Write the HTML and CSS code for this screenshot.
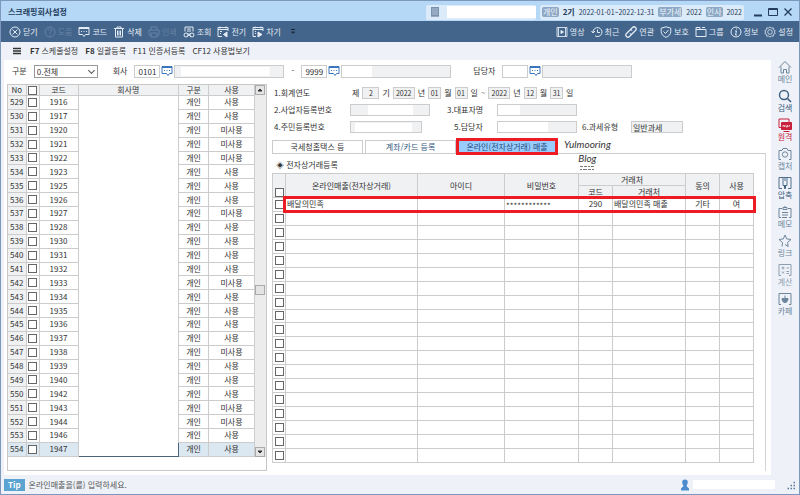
FILE: index.html
```html
<!DOCTYPE html>
<html lang="ko">

<head>
    <meta charset="UTF-8">
    <meta name="viewport" content="width=device-width, initial-scale=1.0">
    <title>스크래핑회사설정</title>
    <link rel="stylesheet" href="styles.css">
</head>

<body>
    <header class="titlebar">
        <h1 class="title">스크래핑회사설정</h1>
        <div class="company">
            <svg class="icon" viewBox="0 0 12 12"><path d="M2 1h8v10H2z" fill="#7892ad" stroke="none"/><path d="M4 2v7M6 2v7M8 2v7M1 11h10" stroke="#dce8f4" stroke-width=".6"/></svg>
            <span class="company-name"></span>
        </div>
        <div class="period">
            <span class="tag">개인</span>
            <b>2기</b>
            <span class="number">2022-01-01~2022-12-31</span>
            <span class="tag">부가세</span>
            <span class="number">2022</span>
            <span class="tag">인사</span>
            <span class="number">2022</span>
        </div>
        <div class="window-buttons">
            <button aria-label="최소화"><svg class="icon" viewBox="0 0 12 12"><path d="M2 9.500h8" stroke-width="2"/></svg></button>
            <button aria-label="최대화"><svg class="icon" viewBox="0 0 12 12"><path d="M1.500 2.500h9v7h-9zM1.500 3.500h9"/></svg></button>
            <button aria-label="닫기"><svg class="icon" viewBox="0 0 12 12"><path d="M2.500 2.500l7 7M9.500 2.500l-7 7" stroke-width="1.300"/></svg></button>
        </div>
    </header>

    <nav class="toolbar">
        <div class="tools">
            <button><svg class="icon" viewBox="0 0 12 12"><circle cx="6" cy="6" r="5"/><path d="M3.500 3.500l5 5M8.500 3.500l-5 5"/></svg>닫기</button>
            <button disabled><svg class="icon" viewBox="0 0 12 12"><circle cx="6" cy="6" r="5"/><path d="M4 4.500c0-2 4-2 4 0C8 6 6 5.500 6 7.500M6 8.500v1"/></svg>도움</button>
            <button><svg class="icon" viewBox="0 0 12 12"><path d="M1 1.500h10v7H7.500L6 10.500 4.500 8.500H1zM1 2.500h10M3 5.500h1M5.500 5.500h1M8 5.500h1"/></svg>코드</button>
            <button><svg class="icon" viewBox="0 0 12 12"><path d="M1 2.500h10M4 2.500v-1.500h4v1.500M2.500 2.500v8.500h7V2.500M4.500 4.500v5M6 4.500v5M7.500 4.500v5"/></svg>삭제</button>
            <button disabled><svg class="icon" viewBox="0 0 12 12"><path d="M3 4V1h6v3M3 9H1V4h10v5H9M3 7h6v4H3z"/></svg>인쇄</button>
            <button><svg class="icon" viewBox="0 0 12 12"><path d="M2 5.500V1h8v4.500M4 3h4M4 5h4M4.500 7L8 11M7.500 7L4 11"/><circle cx="3" cy="9" r="2"/><circle cx="9" cy="9" r="2"/></svg>조회</button>
            <button><svg class="icon" viewBox="0 0 12 12"><path d="M5 10.500H1v-9h10V5M1 3.500h10M3 .5v2M9 .5v2M3 5.500h2M3 7.500h1"/><path d="M10 6v5L6.500 8.500z" fill="currentColor"/></svg>전기</button>
            <button><svg class="icon" viewBox="0 0 12 12"><path d="M4 10.500H1v-9h10V5M1 3.500h10M3 .5v2M9 .5v2M3 5.500h1M3 7.500h1"/><path d="M6 6v5l4-2.500z" fill="currentColor"/></svg>차기</button>
            <button class="more" aria-label="더보기"><svg class="icon" viewBox="0 0 12 12"><path d="M4 3.500h4M4.500 6h3L6 7.500z" stroke="#1c2734"/></svg></button>
        </div>
        <div class="tools">
            <button><svg class="icon" viewBox="0 0 12 12"><path d="M1 1.500h10v9H1zM2.500 2v8M9.500 2v8" stroke-width=".9"/><path d="M5 4.500v3L7.500 6z" fill="currentColor"/></svg>영상</button>
            <button><svg class="icon" viewBox="0 0 12 12"><path d="M2 6a4.500 4.500 0 1 1 2 3.800M.5 5L2 7l2-2M6.500 3.500V6.500H9"/></svg>최근</button>
            <button><svg class="icon" viewBox="0 0 12 12"><path d="M5 4l2.500-2.500a1.800 1.800 0 0 1 3 3L7.500 7.500a1.500 1.500 0 0 1-2.500 0M7 8l-2.500 2.500a1.800 1.800 0 0 1-3-3L4.500 4.500a1.500 1.500 0 0 1 2.500 0" stroke-width="1.300"/></svg>연관</button>
            <button><svg class="icon" viewBox="0 0 12 12"><path d="M6 .8l4.800 1.400v3.300C10.800 8.500 8.500 10.500 6 11.300 3.500 10.500 1.200 8.500 1.200 5.500V2.200zM3.500 5.500L5.500 7.500 8.500 4"/></svg>보호</button>
            <button><svg class="icon" viewBox="0 0 12 12"><path d="M1 1.500h4v2h6v7H1zM1 3.500h4M7 1.500h3"/></svg>그룹</button>
            <button><svg class="icon" viewBox="0 0 12 12"><circle cx="6" cy="6" r="5"/><path d="M5 5h1.500L5.500 9H7M6.500 2.500v1"/></svg>정보</button>
            <button><svg class="icon" viewBox="0 0 12 12"><path d="M6 .8l1.300 1.300 1.900-.3.300 1.900 1.700.9L10.400 6l.8 1.500-1.700.8-.3 1.900-1.900-.2L6 11.200 4.700 10l-1.900.2-.3-1.900-1.700-.8L1.600 6 .8 4.600l1.700-.9.300-1.900 1.900.3z" stroke-width=".8"/><circle cx="6" cy="6" r="2.300" stroke-width=".8"/></svg>설정</button>
        </div>
    </nav>

    <nav class="menu">
        <button aria-label="메뉴"><svg class="icon" viewBox="0 0 12 12"><path d="M2 3.500h8M2 6h8M2 8.500h8" stroke-width="1.300"/></svg></button>
        <button><b>F7</b>스케줄설정</button>
        <button><b>F8</b>일괄등록</button>
        <button>F11 인증서등록</button>
        <button>CF12 사용법보기</button>
    </nav>

    <div class="workspace">
        <main class="content">
            <form class="filter">
                <label for="kind">구분</label>
                <div class="select">
                    <select id="kind">
                        <option>0.전체</option>
                    </select>
                </div>
                <label for="from">회사</label>
                <div class="lookup">
                    <input id="from" class="field short" value="0101">
                    <button type="button" aria-label="회사 찾기"><svg class="icon blue" viewBox="0 0 12 12"><path d="M1 1.500h10v7H8.500L7 10.500 5.500 8.500H1zM1 2.500h10M3 5.500h1M5.500 5.500h1M8 5.500h1"/></svg></button>
                    <input class="field name masked" aria-label="시작 회사명" readonly>
                </div>
                <span>-</span>
                <div class="lookup">
                    <input class="field short" value="9999" aria-label="끝 회사">
                    <button type="button" aria-label="회사 찾기"><svg class="icon blue" viewBox="0 0 12 12"><path d="M1 1.500h10v7H8.500L7 10.500 5.500 8.500H1zM1 2.500h10M3 5.500h1M5.500 5.500h1M8 5.500h1"/></svg></button>
                    <input class="field name masked-left" aria-label="끝 회사명" readonly>
                </div>
                <label for="manager" class="manager">담당자</label>
                <div class="lookup">
                    <input id="manager" class="field short">
                    <button type="button" aria-label="담당자 찾기"><svg class="icon blue" viewBox="0 0 12 12"><path d="M1 1.500h10v7H8.500L7 10.500 5.500 8.500H1zM1 2.500h10M3 5.500h1M5.500 5.500h1M8 5.500h1"/></svg></button>
                    <input class="field person" aria-label="담당자명" readonly>
                </div>
            </form>

            <div class="panes">
                <section class="list">
                    <div class="list-body">
                        <table class="grid companies">
                            <colgroup>
                                <col class="col-no"><col class="col-check"><col class="col-code"><col><col class="col-kind"><col class="col-use">
                            </colgroup>
                            <thead>
                                <tr>
                                    <th>No</th>
                                    <th><input type="checkbox" aria-label="전체 선택"></th>
                                    <th>코드</th>
                                    <th>회사명</th>
                                    <th>구분</th>
                                    <th>사용</th>
                                </tr>
                            </thead>
                            <tbody id="companies"></tbody>
                        </table>
                    </div>
                    <div class="scrollbar">
                        <button aria-label="위로"><svg class="icon" viewBox="0 0 12 12"><path d="M4 7h4L6 5z" fill="#444"/></svg></button>
                        <span class="thumb"></span>
                        <button aria-label="아래로"><svg class="icon" viewBox="0 0 12 12"><path d="M4 5h4L6 7z" fill="#444"/></svg></button>
                    </div>
                </section>

                <section class="detail">
                    <form class="info">
                        <div class="info-row">
                            <label class="label" for="term">1.회계연도</label>
                            <div class="dates">
                                <span>제</span><input id="term" class="field term" value="2" readonly>
                                <span>기</span><input class="field year" value="2022" aria-label="시작 연도" readonly>
                                <span>년</span><input class="field day" value="01" aria-label="시작 월" readonly>
                                <span>월</span><input class="field day" value="01" aria-label="시작 일" readonly>
                                <span>일</span><span>~</span><input class="field year" value="2022" aria-label="끝 연도" readonly>
                                <span>년</span><input class="field day" value="12" aria-label="끝 월" readonly>
                                <span>월</span><input class="field day" value="31" aria-label="끝 일" readonly>
                                <span>일</span>
                            </div>
                        </div>
                        <div class="info-row">
                            <label class="label" for="bizno">2.사업자등록번호</label>
                            <input id="bizno" class="field wide masked-mid" readonly>
                            <label class="label-mid" for="ceo">3.대표자명</label>
                            <input id="ceo" class="field wide masked-left" readonly>
                        </div>
                        <div class="info-row">
                            <label class="label" for="ssn">4.주민등록번호</label>
                            <input id="ssn" class="field ssn masked" readonly>
                            <label class="label-mid indent" for="staff">5.담당자</label>
                            <input id="staff" class="field wide masked-half" readonly>
                            <label class="label-end" for="tax">6.과세유형</label>
                            <input id="tax" class="field tax" value="일반과세" readonly>
                        </div>
                    </form>

                    <div class="tabs">
                        <button class="tab">국세청홈택스 등</button>
                        <button class="tab link">계좌/카드 등록</button>
                        <button class="tab active">온라인(전자상거래) 매출</button>
                        <div class="signature">
                            <span>Yulmooring</span>
                            <span>Blog</span>
                            <svg viewBox="0 0 16 6"><path d="M1 1.500h3M5 1.500h3M9 1.500h2M12 1.500h3M1 4.500h2M4 4.500h4M9 4.500h3M13 4.500h2" stroke="#777"/></svg>
                        </div>
                    </div>

                    <div class="sales">
                        <h2 class="subtitle">◈ 전자상거래등록</h2>
                        <div class="sales-body">
                            <table class="grid shops">
                                <colgroup>
                                    <col class="col-check"><col><col class="col-id"><col class="col-password"><col class="col-small"><col class="col-shop"><col class="col-small"><col class="col-small">
                                </colgroup>
                                <thead>
                                    <tr>
                                        <th rowspan="2" class="check-all"><input type="checkbox" aria-label="전체 선택"></th>
                                        <th rowspan="2">온라인매출(전자상거래)</th>
                                        <th rowspan="2">아이디</th>
                                        <th rowspan="2">비밀번호</th>
                                        <th colspan="2">거래처</th>
                                        <th rowspan="2">동의</th>
                                        <th rowspan="2">사용</th>
                                    </tr>
                                    <tr>
                                        <th>코드</th>
                                        <th>거래처</th>
                                    </tr>
                                </thead>
                                <tbody id="shops">
                                    <tr>
                                        <td><input type="checkbox" aria-label="배달의민족"></td>
                                        <td class="left">배달의민족</td>
                                        <td></td>
                                        <td class="left password">************</td>
                                        <td>290</td>
                                        <td class="left">배달의민족 매출</td>
                                        <td>기타</td>
                                        <td>여</td>
                                    </tr>
                                </tbody>
                            </table>
                            <div class="highlight"></div>
                        </div>
                    </div>
                </section>
            </div>
        </main>

        <aside class="sidebar">
            <button><svg viewBox="0 0 14 14"><path d="M1 7.500L7 1.500l6 6M3 6.500V13h2.500V9.500h3V13H11V6.500"/></svg>메인</button>
            <button class="dark"><svg viewBox="0 0 14 14"><circle cx="6" cy="6" r="4.500" stroke-width="1.400"/><path d="M9.500 9.500L13 13" stroke-width="1.600"/></svg>검색</button>
            <button class="red"><svg viewBox="0 0 14 14"><path d="M3 9.500H1V1h10v3"/><path d="M3.500 4.500h10v7h-10z" fill="currentColor"/><path d="M5.500 13.500h6"/><path d="M5 9V7.500h1.500V9M8 7v2h1.500V7M11 9V7.500h1" stroke="#fff" stroke-width=".7"/></svg>원격</button>
            <button><svg viewBox="0 0 14 14"><path d="M3 12.500H1V3.500h3L5 1.500h4l1 2h3v9h-2"/><circle cx="7" cy="7.500" r="2.700"/></svg>캡처</button>
            <button class="dark"><svg viewBox="0 0 14 14"><path d="M4 12.500H1V1.500h12v11h-3M5 2v7.500h4V2M7 2v3" stroke-width=".9"/><path d="M6.500 9.500v3h1v-3"/></svg>압축</button>
            <button><svg viewBox="0 0 14 14"><path d="M3 12.500H1V3.500h3M10 3.500h3v9h-2M5 4.500V2.500h4v2zM7 1v1M4 7.500h6M4 10h6M4 12.500h5"/></svg>메모</button>
            <button><svg viewBox="0 0 14 14"><path d="M4 12.500L4.500 8.500 1 5.500l4.300-.6L7 1l1.700 3.900 4.300.6-3.500 3 .7 4L7 10.500"/></svg>링크</button>
            <button class="pale"><svg viewBox="0 0 14 14"><path d="M3 12.500H1V1.500h12v11h-2M3.500 5h3M5 3.500v3M8.500 5H11M4 8.500l2 2M6 8.500l-2 2M8.500 8.500H11M8.500 10.500H11"/></svg>계산</button>
            <button><svg viewBox="0 0 14 14"><path d="M3 12.500H1V1.500h12v11h-2"/><path d="M4 6.500h6c0 2.500-1.300 4-3 4s-3-1.500-3-4zM7 6V3.500" fill="currentColor"/></svg>카페</button>
        </aside>
    </div>

    <footer class="status">
        <span class="tip">Tip</span>
        <span>온라인매출을(를) 입력하세요.</span>
        <div class="user">
            <svg class="icon" viewBox="0 0 12 12"><path d="M6 .5c4 0 3 4 1.500 6.500L10 9.500v2H2v-2L4.500 7C3 4.500 2 .5 6 .5z" fill="#4b8bce" stroke="none"/></svg>
            <span class="user-name"></span>
            <svg class="icon grip" viewBox="0 0 12 12"><path d="M8.500 3.500h1.500M5.500 6.500h1.500M8.500 6.500h1.500M2.500 9.500h1.500M5.500 9.500h1.500M8.500 9.500h1.500" stroke="#5f7894" stroke-width="1.500"/></svg>
        </div>
    </footer>

    <script src="script.js"></script>
</body>

</html>
```
FILE: styles.css
```css
* {
    box-sizing: border-box;
}

body {
    display: flex;
    flex-direction: column;
    height: 100vh;
    margin: 0;
    border: 1px solid #7d98bd;
    background-color: #eef2f8;
    color: #333;
    font-family: "Noto Sans CJK KR", sans-serif;
    font-size: 8px;
    line-height: 10px;
    white-space: nowrap;
    overflow: hidden;
}

button,
input,
select {
    margin: 0;
    padding: 0;
    color: inherit;
    font: inherit;
}

button {
    display: flex;
    align-items: center;
    border: none;
    background: none;
    white-space: nowrap;
}

.icon {
    width: 12px;
    height: 12px;
    flex: none;
    fill: none;
    stroke: currentColor;
}

.blue {
    color: #3976bd;
}

/* title bar */
.titlebar {
    display: flex;
    align-items: center;
    height: 20px;
    flex: none;
    padding: 2px 5px 0 7px;
    background-color: #b5d8f7;
    color: #243c5c;
}

.title {
    flex: 1;
    margin: 0;
    font-size: 8px;
    font-weight: 700;
}

.company,
.period {
    display: flex;
    align-items: center;
    height: 15px;
    margin-right: 4px;
    padding: 0 3px;
    border-radius: 2px;
    background-color: #dcebf9;
}

.company {
    width: 110px;
    padding-right: 0;
    gap: 6px;
}

.company-name {
    flex: 1;
    height: 12px;
    background-color: #fff;
}

.period {
    width: 204px;
    padding: 0 2px;
    justify-content: space-between;
}

.number {
    font-size: 7px;
}

.tag {
    padding: 0 1px;
    border-radius: 2px;
    background-color: #8da8c4;
    color: #eef5fc;
}

.window-buttons {
    display: flex;
    gap: 3px;
    margin-left: 4px;
}

/* toolbar */
.toolbar {
    display: flex;
    justify-content: space-between;
    height: 21px;
    flex: none;
    padding: 0 6px 0 8px;
    background-color: #43658c;
    color: #e3ebf4;
}

.tools {
    display: flex;
    gap: 6px;
}

.tools button {
    gap: 2px;
}

.tools button:disabled {
    color: #6683a5;
}

.menu {
    display: flex;
    align-items: center;
    gap: 7px;
    height: 18px;
    flex: none;
    padding: 0 10px;
}

.menu button {
    gap: 2px;
}

/* workspace */
.workspace {
    display: flex;
    flex: 1;
    min-height: 0;
}

.content {
    display: flex;
    flex-direction: column;
    flex: 1;
    min-width: 0;
    margin-left: 3px;
    padding: 0 5px 4px 3px;
    background-color: #fff;
}

.filter {
    display: flex;
    align-items: center;
    gap: 7px;
    height: 24px;
    flex: none;
    padding: 0 0 2px 5px;
}

.select {
    position: relative;
    margin-right: 8px;
}

.select::after {
    content: "";
    position: absolute;
    right: 4px;
    top: 3px;
    width: 4px;
    height: 4px;
    border: solid #555;
    border-width: 0 1px 1px 0;
    transform: rotate(45deg);
}

.select select {
    display: block;
    width: 64px;
    height: 13px;
    padding-left: 2px;
    border: 1px solid #999;
    border-radius: 0;
    background-color: #fff;
    line-height: 11px;
    appearance: none;
}

.lookup {
    display: flex;
    align-items: center;
    gap: 1px;
}

.manager {
    margin-left: 15px;
}

.field {
    height: 12px;
    border: 1px solid #ccc;
    border-radius: 0;
    background-color: #fff;
    text-align: center;
}

.field:read-only {
    background-color: #f0f1f2;
}

.lookup .field {
    height: 13px;
}

.short {
    width: 26px;
}

.name {
    width: 110px;
}

.person {
    width: 90px;
}

/* blanked out values */
.masked {
    background-image: linear-gradient(#fff, #fff);
    background-position: 30% center;
    background-repeat: no-repeat;
    background-size: 82% 9px;
}

.masked-left {
    background-image: linear-gradient(to right, #fff 28%, transparent 28%);
}

.masked-mid {
    background-image: linear-gradient(to right, transparent 22%, #fff 22%, #fff 79%, transparent 79%);
}

.masked-half {
    background-image: linear-gradient(to right, #fff 64%, transparent 64%);
}

.panes {
    display: flex;
    flex: 1;
    min-height: 0;
    gap: 5px;
}

/* company list */
.list {
    display: flex;
    width: 260px;
    flex: none;
    border: 1px solid #c8c8c8;
}

.list-body {
    flex: 1;
    padding-bottom: 13px;
}

.scrollbar {
    display: flex;
    flex-direction: column;
    justify-content: space-between;
    width: 11px;
    margin-bottom: 13px;
    background-color: #ececec;
}

.scrollbar button,
.thumb {
    width: 10px;
    height: 10px;
    justify-content: center;
    border: 1px solid #aaa;
    background-color: #e4e4e4;
}

.thumb {
    margin-top: 38px;
}

.grid {
    width: 100%;
    height: 100%;
    border-collapse: collapse;
    table-layout: fixed;
}

.grid th,
.grid td {
    padding: 0;
    border: 1px solid #ccc;
    font-weight: 400;
    text-align: center;
    overflow: hidden;
}

.grid th {
    background-color: #f0f1f3;
}

.grid .left {
    padding-left: 1px;
    text-align: left;
}

.grid input {
    display: block;
    width: 9px;
    height: 9px;
    margin: 0 auto;
    border: 1px solid #666;
    background-color: #fff;
    appearance: none;
}

.companies th,
.companies td {
    border-width: 0 1px 1px 0;
}

.companies td:first-child {
    background-color: #f0f1f3;
}

.companies td.company-cell {
    border-bottom-color: transparent;
}

.companies .selected td {
    background-color: #dbe7f1;
}

.companies .selected td.company-cell {
    border: 1px solid #4b627c;
    border-top: none;
    background-color: #fff;
}

.shops thead tr {
    height: 12px;
}

.shops tbody tr {
    height: 13px;
}

.shops .password {
    padding-top: 3px;
    line-height: 8px;
}

.col-no {
    width: 18px;
}

.col-check {
    width: 13px;
}

.col-code {
    width: 39px;
}

.col-kind {
    width: 30px;
}

.col-use {
    width: 46px;
}

/* company details */
.detail {
    display: flex;
    flex-direction: column;
    flex: 1;
    min-width: 0;
}

.info {
    display: flex;
    flex-direction: column;
    gap: 5px;
    padding: 3px 0 7px 2px;
}

.info-row,
.dates {
    display: flex;
    align-items: center;
}

.label {
    width: 76px;
}

.dates {
    gap: 3px;
    padding-left: 2px;
}

.dates .field {
    font-size: 7px;
}

.term {
    width: 17px;
}

.year {
    width: 22px;
}

.day {
    width: 13px;
}

.wide {
    width: 80px;
}

.ssn {
    width: 72px;
}

.label-mid {
    width: 67px;
    padding-left: 17px;
}

.indent {
    width: 75px;
    padding-left: 32px;
}

.label-end {
    width: 54px;
    padding-left: 5px;
}

.tax {
    width: 52px;
    padding-left: 1px;
    text-align: left;
}

.tabs {
    display: flex;
    position: relative;
    gap: 2px;
    border-bottom: 1px solid #ccc;
}

.tab {
    width: 91px;
    height: 13px;
    justify-content: center;
    border: 1px solid #ccc;
    border-bottom: none;
    background-color: #fff;
}

.link {
    color: #2f5880;
}

.active {
    width: 98px;
    border: none;
    outline: 3px solid #ed1c24;
    outline-offset: -1px;
    background-color: #99ccff;
    color: #244a78;
}

.signature {
    display: flex;
    flex-direction: column;
    position: absolute;
    left: 292px;
    top: -3px;
    align-items: center;
    color: #333;
    font-family: Lato, sans-serif;
    font-size: 10px;
    font-style: italic;
    line-height: 14px;
}

.signature svg {
    width: 16px;
    height: 6px;
}

.sales {
    display: flex;
    flex-direction: column;
    flex: 1;
    min-height: 0;
    padding: 0 11px 8px 0;
    border-right: 1px solid #d4d4d4;
}

.subtitle {
    margin: 0;
    padding: 6px 4px 3px;
    font-size: 8px;
    font-weight: 400;
}

.sales-body {
    position: relative;
    flex: 1;
    min-height: 0;
}

.check-all {
    vertical-align: bottom;
}

.col-id {
    width: 87px;
}

.col-password {
    width: 74px;
}

.col-small {
    width: 34px;
}

.col-shop {
    width: 73px;
}

.highlight {
    position: absolute;
    left: 11px;
    right: -2px;
    top: 23px;
    height: 17px;
    border: 3px solid #ed1c24;
}

/* side menu */
.sidebar {
    display: flex;
    flex-direction: column;
    gap: 5px;
    width: 28px;
    flex: none;
    color: #6d859c;
}

.sidebar button {
    flex-direction: column;
    height: 24px;
}

.sidebar svg {
    width: 14px;
    height: 14px;
    flex: none;
    fill: none;
    stroke: currentColor;
}

.sidebar .dark {
    color: #3d6082;
}

.sidebar .red {
    color: #c8203c;
}

.sidebar .pale {
    color: #8c9eb0;
}

/* status bar */
.status {
    display: flex;
    align-items: center;
    gap: 4px;
    height: 19px;
    flex: none;
    padding: 0 2px 0 3px;
    color: #555;
}

.tip {
    padding: 1px 4px;
    background-color: #5ba3d0;
    color: #fff;
    font-weight: 700;
}

.user {
    display: flex;
    align-items: center;
    gap: 2px;
    margin-left: auto;
}

.user-name {
    width: 82px;
    height: 9px;
    background-color: #fff;
}

.grip {
    margin-left: 8px;
}
```
FILE: script.js
```js
document.addEventListener("DOMContentLoaded", function () {
    let codes = [
        1916, 1917, 1920, 1921, 1922, 1923, 1925, 1926, 1927, 1928, 1930, 1931, 1932,
        1933, 1934, 1935, 1936, 1937, 1938, 1939, 1940, 1942, 1943, 1944, 1946, 1947
    ];
    let unused = [1920, 1921, 1922, 1927, 1933, 1938, 1943, 1944];
    let companies = document.getElementById("companies");
    let shops = document.getElementById("shops");

    // Company rows, the last one is selected
    codes.forEach((code, index) => {
        let row = document.createElement("tr");
        if (index === codes.length - 1) {
            row.className = "selected";
        }
        row.innerHTML = `
            <td>${529 + index}</td>
            <td><input type="checkbox" aria-label="${code}"></td>
            <td>${code}</td>
            <td class="company-cell"></td>
            <td>개인</td>
            <td>${unused.includes(code) ? "미사용" : "사용"}</td>`;
        companies.appendChild(row);
    });

    // Empty rows below the registered shop
    for (let i = 0; i < 18; i++) {
        let row = document.createElement("tr");
        row.innerHTML = '<td><input type="checkbox" aria-label="선택"></td>' + "<td></td>".repeat(7);
        shops.appendChild(row);
    }
});
```
